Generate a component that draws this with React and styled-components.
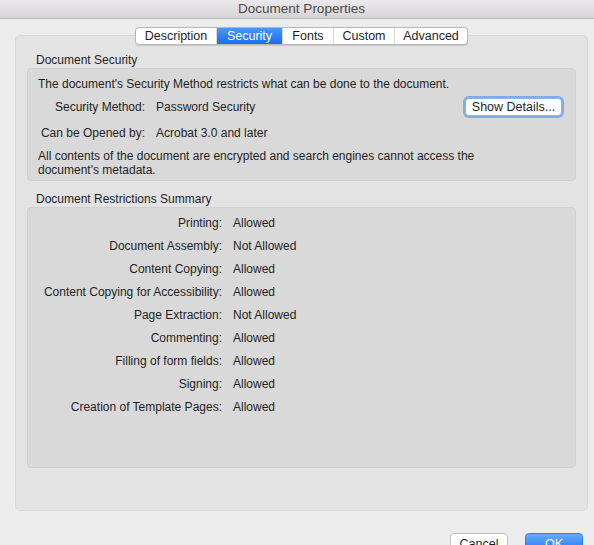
import React from 'react'
import styled, { createGlobalStyle } from 'styled-components'

const GlobalStyle = createGlobalStyle`
  html, body {
    margin: 0;
    padding: 0;
    overflow: hidden;
    background: #ececec;
  }
  body {
    font-family: "Liberation Sans", Arial, sans-serif;
    font-size: 12px;
    color: #1f1f1f;
  }
`

const Window = styled.div`
  width: 594px;
  height: 545px;
  display: flex;
  flex-direction: column;
  background: #ececec;
  overflow: hidden;
`

const TitleBar = styled.div`
  height: 18px;
  line-height: 18px;
  flex-shrink: 0;
  padding-left: 9px;
  text-align: center;
  font-size: 13.5px;
  color: #4b4b4b;
  background: linear-gradient(#ebe9eb, #d6d4d6);
  border-bottom: 1px solid #b9b9b9;
`

const Body = styled.div`
  padding: 8px 6px 0 15px;
  display: flex;
  flex-direction: column;
`

const TabBar = styled.div`
  display: flex;
  justify-content: center;
  margin-bottom: -10px;
  position: relative;
  z-index: 1;
`

const Segments = styled.div`
  display: flex;
  height: 16px;
  border: 1px solid #b8b8b8;
  border-radius: 4px;
  background: #fff;
  overflow: hidden;
  box-shadow: 0 0.5px 1px rgba(0, 0, 0, 0.12);
`

const Tab = styled.div`
  width: ${p => p.$w}px;
  line-height: 16px;
  text-align: center;
  font-size: 12.5px;
  color: ${p => (p.$active ? '#fff' : '#1f1f1f')};
  background: ${p => (p.$active ? 'linear-gradient(#4b97f8, #1a6cf4)' : 'transparent')};
  border-left: 1px solid #d9d9d9;
  &:first-child {
    border-left: none;
  }
`

const TabBox = styled.div`
  height: 476px;
  box-sizing: border-box;
  padding: 16px 11px 0 11px;
  background: #e3e3e3;
  border: 1px solid #d8d8d8;
  border-radius: 5px;
  display: flex;
  flex-direction: column;
`

const GroupLabel = styled.div`
  line-height: 16px;
  padding-left: 9px;
  margin-top: ${p => p.$gap || 0}px;
`

const Group = styled.div`
  background: #d9d9d9;
  border: 1px solid #d1d1d1;
  border-radius: 4px;
  box-sizing: border-box;
  height: ${p => p.$h}px;
  padding: ${p => p.$pad};
`

const Line = styled.div`
  line-height: 16px;
`

const InfoRow = styled.div`
  display: grid;
  grid-template-columns: 107px auto 1fr;
  column-gap: 11px;
  align-items: center;
  height: 22px;
  margin-top: ${p => p.$gap}px;
`

const Key = styled.span`
  text-align: right;
  white-space: nowrap;
`

const Value = styled.span`
  white-space: nowrap;
`

const DetailsButton = styled.button`
  justify-self: end;
  margin-right: 2px;
  width: 97px;
  height: 18px;
  padding: 0;
  font: inherit;
  font-size: 12.5px;
  color: #1f1f1f;
  background: #fff;
  border: 1px solid #8ab6ef;
  border-radius: 4px;
  box-shadow: 0 0 0 2px rgba(94, 156, 238, 0.75);
`

const Note = styled.p`
  margin: 5px 0 0;
  line-height: 14px;
  max-width: 492px;
`

const Summary = styled.div`
  display: grid;
  grid-template-columns: 184px auto;
  column-gap: 11px;
  grid-auto-rows: 23px;
  align-items: center;
`

const Footer = styled.div`
  display: flex;
  justify-content: flex-end;
  gap: 17px;
  padding: 22px 5px 0 0;
`

const PushButton = styled.button`
  width: 58px;
  height: 21px;
  padding: 0;
  font: inherit;
  font-size: 12.5px;
  border-radius: 4px;
  color: ${p => (p.$primary ? '#fff' : '#1f1f1f')};
  background: ${p => (p.$primary ? 'linear-gradient(#68aafa, #1d72f5)' : '#fff')};
  border: 1px solid ${p => (p.$primary ? '#2d7ef2' : '#c2c2c2')};
`

const tabs = [
  { name: 'Description', w: 80 },
  { name: 'Security', w: 65 },
  { name: 'Fonts', w: 50 },
  { name: 'Custom', w: 60 },
  { name: 'Advanced', w: 72 },
]

const restrictions = [
  ['Printing', 'Allowed'],
  ['Document Assembly', 'Not Allowed'],
  ['Content Copying', 'Allowed'],
  ['Content Copying for Accessibility', 'Allowed'],
  ['Page Extraction', 'Not Allowed'],
  ['Commenting', 'Allowed'],
  ['Filling of form fields', 'Allowed'],
  ['Signing', 'Allowed'],
  ['Creation of Template Pages', 'Allowed'],
]

export default function App() {
  return (
    <Window>
      <GlobalStyle />
      <TitleBar>Document Properties</TitleBar>
      <Body>
        <TabBar>
          <Segments>
            {tabs.map(t => (
              <Tab key={t.name} $w={t.w} $active={t.name === 'Security'}>
                {t.name}
              </Tab>
            ))}
          </Segments>
        </TabBar>
        <TabBox>
          <GroupLabel>Document Security</GroupLabel>
          <Group $h={113} $pad="7px 11px 0 10px">
            <Line>The document's Security Method restricts what can be done to the document.</Line>
            <InfoRow $gap={4}>
              <Key>Security Method:</Key>
              <Value>Password Security</Value>
              <DetailsButton>Show Details...</DetailsButton>
            </InfoRow>
            <InfoRow $gap={4}>
              <Key>Can be Opened by:</Key>
              <Value>Acrobat 3.0 and later</Value>
            </InfoRow>
            <Note>
              All contents of the document are encrypted and search engines cannot access the
              document's metadata.
            </Note>
          </Group>
          <GroupLabel $gap={10}>Document Restrictions Summary</GroupLabel>
          <Group $h={261} $pad="3px 11px 0 10px">
            <Summary>
              {restrictions.map(([k, v]) => (
                <React.Fragment key={k}>
                  <Key>{k}:</Key>
                  <Value>{v}</Value>
                </React.Fragment>
              ))}
            </Summary>
          </Group>
        </TabBox>
        <Footer>
          <PushButton>Cancel</PushButton>
          <PushButton $primary>OK</PushButton>
        </Footer>
      </Body>
    </Window>
  )
}
